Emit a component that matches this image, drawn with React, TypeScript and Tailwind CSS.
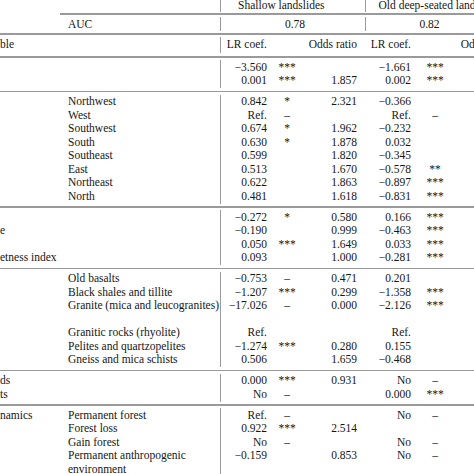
type Row = {
  l?: string
  s?: string
  v?: string[]
}

const sections: Row[][] = [
  [
    { v: ['−3.560', '***', '', '−1.661', '***', ''] },
    { v: ['0.001', '***', '1.857', '0.002', '***', ''] },
  ],
  [
    { s: 'Northwest', v: ['0.842', '*', '2.321', '−0.366', '', ''] },
    { s: 'West', v: ['Ref.', '–', '', 'Ref.', '–', ''] },
    { s: 'Southwest', v: ['0.674', '*', '1.962', '−0.232', '', ''] },
    { s: 'South', v: ['0.630', '*', '1.878', '0.032', '', ''] },
    { s: 'Southeast', v: ['0.599', '', '1.820', '−0.345', '', ''] },
    { s: 'East', v: ['0.513', '', '1.670', '−0.578', '**', ''] },
    { s: 'Northeast', v: ['0.622', '', '1.863', '−0.897', '***', ''] },
    { s: 'North', v: ['0.481', '', '1.618', '−0.831', '***', ''] },
  ],
  [
    { v: ['−0.272', '*', '0.580', '0.166', '***', ''] },
    { l: 'e', v: ['−0.190', '', '0.999', '−0.463', '***', ''] },
    { v: ['0.050', '***', '1.649', '0.033', '***', ''] },
    { l: 'etness index', v: ['0.093', '', '1.000', '−0.281', '***', ''] },
  ],
  [
    { s: 'Old basalts', v: ['−0.753', '–', '0.471', '0.201', '', ''] },
    { s: 'Black shales and tillite', v: ['−1.207', '***', '0.299', '−1.358', '***', ''] },
    { s: 'Granite (mica and leucogranites)', v: ['−17.026', '–', '0.000', '−2.126', '***', ''] },
    {},
    { s: 'Granitic rocks (rhyolite)', v: ['Ref.', '', '', 'Ref.', '', ''] },
    { s: 'Pelites and quartzopelites', v: ['−1.274', '***', '0.280', '0.155', '', ''] },
    { s: 'Gneiss and mica schists', v: ['0.506', '', '1.659', '−0.468', '', ''] },
  ],
  [
    { l: 'ds', v: ['0.000', '***', '0.931', 'No', '–', ''] },
    { l: 'ts', v: ['No', '–', '', '0.000', '***', ''] },
  ],
  [
    { l: 'namics', s: 'Permanent forest', v: ['Ref.', '–', '', 'No', '–', ''] },
    { s: 'Forest loss', v: ['0.922', '***', '2.514', '', '', ''] },
    { s: 'Gain forest', v: ['No', '–', '', 'No', '–', ''] },
    { s: 'Permanent anthropogenic', v: ['−0.159', '', '0.853', 'No', '–', ''] },
    { s: 'environment' },
  ],
]

function Cells({ v }: { v?: string[] }) {
  const c = v ?? ['', '', '', '', '', '']
  return (
    <div className="flex h-[13.5px] leading-[13.5px] whitespace-nowrap">
      <div className="w-[46px] shrink-0 text-right">{c[0]}</div>
      <div className="w-[40px] shrink-0 text-center">{c[1]}</div>
      <div className="w-[58px] shrink-0 text-right pr-[8px]">{c[2]}</div>
      <div className="w-[46px] shrink-0 text-right">{c[3]}</div>
      <div className="w-[48px] shrink-0 text-center">{c[4]}</div>
      <div className="w-[50px] shrink-0 text-right">{c[5]}</div>
    </div>
  )
}

function Rule({ indent }: { indent?: boolean }) {
  return <div className={`h-[1.5px] bg-[#9a9a9a] ${indent ? 'ml-[60px]' : ''}`} />
}

function Section({ rows }: { rows: Row[] }) {
  return (
    <div className="flex py-[3px]">
      <div className="w-[220px] shrink-0">
        {rows.map((r, i) => (
          <div key={i} className="flex h-[13.5px] leading-[13.5px] whitespace-nowrap">
            <div className="w-[60px] shrink-0 overflow-hidden">{r.l}</div>
            <div className="pl-[8px]">{r.s}</div>
          </div>
        ))}
      </div>
      <div className="w-[290px] shrink-0 border-l-[1.5px] border-[#9a9a9a] -my-[0.5px] py-[0.5px]">
        {rows.map((r, i) => (
          <Cells key={i} v={r.v} />
        ))}
      </div>
    </div>
  )
}

export default function App() {
  return (
    <div className="w-[474px] h-[474px] overflow-hidden bg-white text-[#161616] text-[11.5px] [font-family:'Liberation_Serif','Times_New_Roman',serif]">
      <div className="w-[520px]">
        {/* group header */}
        <div className="flex h-[13px]">
          <div className="w-[220px] shrink-0" />
          <div className="border-l-[1.5px] border-[#9a9a9a] h-[11.5px] w-[145px] shrink-0 pl-[17px] leading-[11px] whitespace-nowrap">
            Shallow landslides
          </div>
          <div className="border-l-[1.5px] border-[#9a9a9a] h-[11.5px] pl-[12.5px] leading-[11px] whitespace-nowrap">
            Old deep-seated landslides
          </div>
        </div>
        <Rule indent />

        {/* AUC */}
        <div className="flex h-[18.5px] pt-[2px]">
          <div className="w-[220px] shrink-0 pl-[68px] pt-[1px] leading-[13.5px]">AUC</div>
          <div className="border-l-[1.5px] border-[#9a9a9a] h-[14px] w-[145px] shrink-0 pt-[1px] pl-[4px] text-center leading-[13.5px]">
            0.78
          </div>
          <div className="border-l-[1.5px] border-[#9a9a9a] h-[14px] w-[128px] shrink-0 pt-[1px] text-center leading-[13.5px]">
            0.82
          </div>
        </div>
        <Rule />

        {/* column header */}
        <div className="flex h-[21.5px] pt-[2.5px]">
          <div className="w-[220px] shrink-0 pt-[0.5px] leading-[13.5px]">ble</div>
          <div className="w-[290px] shrink-0 border-l-[1.5px] border-[#9a9a9a] h-[15.5px] pt-[0.5px]">
            <Cells v={['LR coef.', '', 'Odds ratio', 'LR coef.', '', 'Odds ratio']} />
          </div>
        </div>
        <Rule />

        {sections.map((rows, i) => (
          <div key={i}>
            {i > 0 && <Rule />}
            <Section rows={rows} />
          </div>
        ))}
      </div>
    </div>
  )
}
